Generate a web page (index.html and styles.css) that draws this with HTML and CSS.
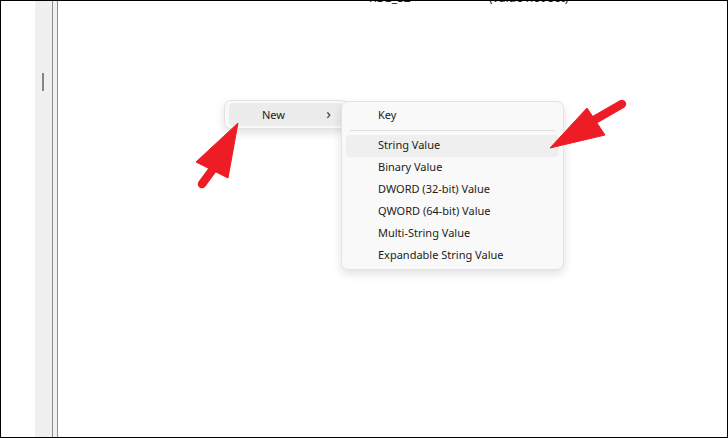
FILE: index.html
```html
<!DOCTYPE html>
<html>
<head>
<meta charset="utf-8">
<link rel="stylesheet" href="styles.css">
</head>
<body>
<div class="frame">
  <div class="gutter"></div>
  <div class="tree-scroll"><div class="thumb"></div></div>
  <div class="splitter"></div>
  <div class="content">
    <div class="row">
      <svg class="row-icon" width="18" height="14" viewBox="0 0 18 14"><path d="M1 2 L6 10 L12 12 L14 9" fill="none" stroke="#8a8a8a" stroke-width="1"/><rect x="15" y="0" width="2" height="8" fill="#2a6fd6"/></svg>
      <span class="cell type">REG_SZ</span>
      <span class="cell data">(value not set)</span>
    </div>
  </div>

  <div class="menu parent">
    <div class="item active"><span class="label">New</span><span class="chev">&#x203A;</span></div>
  </div>

  <div class="menu sub">
    <div class="item">Key</div>
    <div class="sep"></div>
    <div class="item active">String Value</div>
    <div class="item">Binary Value</div>
    <div class="item">DWORD (32-bit) Value</div>
    <div class="item">QWORD (64-bit) Value</div>
    <div class="item">Multi-String Value</div>
    <div class="item">Expandable String Value</div>
  </div>

  <svg class="arrows" width="728" height="438" viewBox="0 0 728 438">
    <g fill="#ee1c25" stroke="#ee1c25">
      <polygon points="238,123 196,162 228,178" stroke-width="1" stroke-linejoin="round"/>
      <line x1="202" y1="184" x2="216" y2="165" stroke-width="8.5" stroke-linecap="round"/>
      <polygon points="550,148 587,108 605,135" stroke-width="1" stroke-linejoin="round"/>
      <line x1="589" y1="123" x2="622" y2="104" stroke-width="8.5" stroke-linecap="round"/>
    </g>
  </svg>
</div>
</body>
</html>
```
FILE: styles.css
```css
html, body {
  margin: 0;
  padding: 0;
  background: #ffffff;
}
.frame {
  position: relative;
  width: 728px;
  height: 438px;
  box-sizing: border-box;
  border: 1px solid #000;
  display: flex;
  overflow: hidden;
  font-family: "Noto Sans", "Open Sans", sans-serif;
  color: #1b1b1b;
}
.gutter {
  width: 34px;
  flex: none;
  background: #ffffff;
}
.tree-scroll {
  width: 17px;
  flex: none;
  background: #f0f0f0;
  position: relative;
}
.thumb {
  position: absolute;
  left: 7px;
  top: 72px;
  width: 2px;
  height: 18px;
  background: #858585;
}
.splitter {
  width: 4px;
  flex: none;
  background: #f0f0f0;
  border-left: 1px solid #8c8c8c;
  border-right: 1px solid #8c8c94;
}
.content {
  flex: 1;
  background: #fff;
}
.row {
  display: flex;
  align-items: center;
  height: 16px;
  margin-top: -12px;
  padding-left: 4px;
  font-size: 12px;
}
.row-icon {
  flex: none;
  margin-top: -4px;
}
.cell.type {
  margin-left: 289px;
  width: 120px;
}
.menu {
  position: absolute;
  background: #f9f9f9;
  border: 1px solid #e3e3e3;
  border-radius: 7px;
  box-shadow: 0 4px 10px rgba(0, 0, 0, 0.12);
  box-sizing: border-box;
  font-size: 11px;
}
.menu.parent {
  left: 223px;
  top: 99px;
  width: 124px;
  height: 29px;
  padding: 2px 4px;
}
.menu.parent .item {
  display: flex;
  align-items: center;
  height: 23px;
  padding-left: 33px;
  padding-right: 12px;
  border-radius: 4px;
  background: #ececec;
}
.menu.parent .label {
  flex: 1;
  margin-top: -1px;
}
.chev {
  font-size: 15px;
  line-height: 1;
  margin-top: -3px;
  color: #333;
}
.menu.sub {
  left: 340px;
  top: 100px;
  width: 223px;
  padding: 3px 4px 2px;
}
.menu.sub .item {
  height: 22px;
  line-height: 20px;
  padding-left: 32px;
  border-radius: 4px;
  white-space: nowrap;
}
.menu.sub .item.active {
  background: #efefef;
}
.sep {
  height: 1px;
  background: #dedede;
  margin: 3px 4px 4px;
}
.arrows {
  position: absolute;
  left: -1px;
  top: -1px;
  pointer-events: none;
}
```
